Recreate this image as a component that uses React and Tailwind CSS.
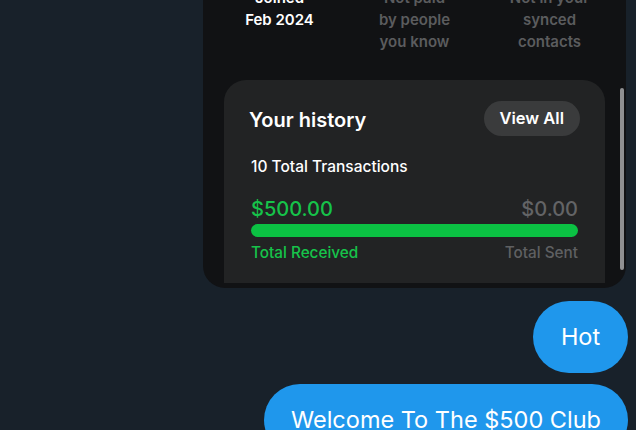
export default function App() {
  const stats = [
    { lines: ["Joined", "Feb 2024"], tone: "text-white" },
    { lines: ["Not paid", "by people", "you know"], tone: "text-[#5b5c5e]" },
    { lines: ["Not in your", "synced", "contacts"], tone: "text-[#5b5c5e]" },
  ];

  return (
    <div className="h-[430px] w-[636px] overflow-hidden bg-[#18212a] font-['Inter',sans-serif]">
      <div className="relative ml-[203px] h-[288px] w-[423px] overflow-hidden rounded-b-[22px] bg-[#111214]">
        <div className="mt-[-13px] grid grid-cols-3 px-[9px] text-[15px] font-semibold leading-[22px]">
          {stats.map((s, i) => (
            <div key={i} className={`text-center ${s.tone}`}>
              {s.lines.map((l) => (
                <div key={l}>{l}</div>
              ))}
            </div>
          ))}
        </div>

        <div className="mx-[21px] mt-[27px] h-[203px] rounded-t-[22px] bg-[#222324] px-[25px] pt-[21px]">
          <div className="flex items-center justify-between">
            <h2 className="pt-[2px] text-[20px] font-semibold text-white">Your history</h2>
            <button className="h-[35px] rounded-full bg-[#3a3b3c] px-[16px] text-[16.5px] font-semibold text-white">
              View All
            </button>
          </div>
          <p className="mt-[19px] pl-[2px] text-[15.5px] font-medium text-white">10 Total Transactions</p>
          <div className="mt-[19px] flex items-end justify-between px-[2px] text-[20px] font-medium leading-[24px]">
            <span className="text-[#16c34a]">$500.00</span>
            <span className="text-[#636466]">$0.00</span>
          </div>
          <div className="mx-[2px] mt-[3px] h-[13px] rounded-full bg-[#0bc143]" />
          <div className="mt-[5px] flex justify-between px-[2px] text-[15.3px] font-medium">
            <span className="text-[#16c34a]">Total Received</span>
            <span className="text-[#5f6062]">Total Sent</span>
          </div>
        </div>

        <div className="absolute right-[2px] top-[88px] h-[182px] w-[4px] rounded-full bg-[#8f9092]" />
      </div>

      <div className="mr-[8px] flex flex-col items-end text-[23.5px] font-normal text-white">
        <div className="mt-[13px] flex h-[72px] w-[95px] items-center justify-center rounded-full bg-[#1f97ec]">
          Hot
        </div>
        <div className="mt-[11px] flex h-[72px] w-[364px] items-center justify-center rounded-[36px] bg-[#1f97ec] pb-[1px]">
          Welcome To The $500 Club
        </div>
      </div>
    </div>
  );
}
